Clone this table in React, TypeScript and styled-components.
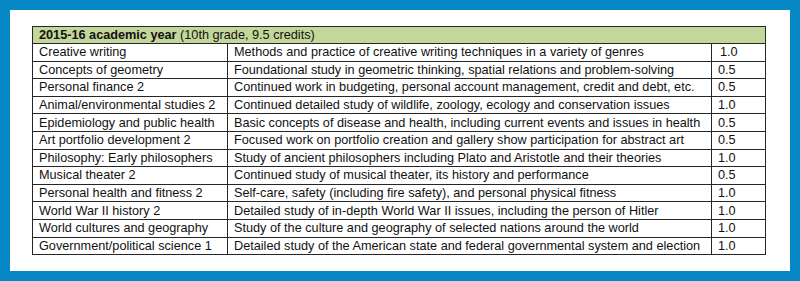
import React from 'react';
import styled, { createGlobalStyle } from 'styled-components';

const courses = [
  { name: 'Creative writing', about: 'Methods and practice of creative writing techniques in a variety of genres', credits: '1.0', nudge: true },
  { name: 'Concepts of geometry', about: 'Foundational study in geometric thinking, spatial relations and problem-solving', credits: '0.5' },
  { name: 'Personal finance 2', about: 'Continued work in budgeting, personal account management, credit and debt, etc.', credits: '0.5' },
  { name: 'Animal/environmental studies 2', about: 'Continued detailed study of wildlife, zoology, ecology and conservation issues', credits: '1.0' },
  { name: 'Epidemiology and public health', about: 'Basic concepts of disease and health, including current events and issues in health', credits: '0.5' },
  { name: 'Art portfolio development 2', about: 'Focused work on portfolio creation and gallery show participation for abstract art', credits: '0.5' },
  { name: 'Philosophy: Early philosophers', about: 'Study of ancient philosophers including Plato and Aristotle and their theories', credits: '1.0' },
  { name: 'Musical theater 2', about: 'Continued study of musical theater, its history and performance', credits: '0.5' },
  { name: 'Personal health and fitness 2', about: 'Self-care, safety (including fire safety), and personal physical fitness', credits: '1.0' },
  { name: 'World War II history 2', about: 'Detailed study of in-depth World War II issues, including the person of Hitler', credits: '1.0' },
  { name: 'World cultures and geography', about: 'Study of the culture and geography of selected nations around the world', credits: '1.0' },
  { name: 'Government/political science 1', about: 'Detailed study of the American state and federal governmental system and election', credits: '1.0' },
];

export default function App() {
  return (
    <>
      <GlobalStyle />
      <Panel>
        <Table>
          <colgroup>
            <Col $width={195} />
            <Col $width={484} />
            <Col $width={54} />
          </colgroup>
          <tbody>
            <HeaderRow>
              <td colSpan={3}>
                <b>2015-16 academic year</b> (10th grade, 9.5 credits)
              </td>
            </HeaderRow>
            {courses.map(course => (
              <Row key={course.name}>
                <td>{course.name}</td>
                <td>{course.about}</td>
                <Credit $nudge={course.nudge}>{course.credits}</Credit>
              </Row>
            ))}
          </tbody>
        </Table>
      </Panel>
    </>
  );
}

const GlobalStyle = createGlobalStyle`
  html, body {
    margin: 0;
    background: #0788c6;
  }
`;

const Panel = styled.div`
  margin: 10px;
  height: 261px;
  padding: 16px 0 0 22px;
  box-sizing: border-box;
  background: #fff;
`;

const Table = styled.table`
  width: 734px;
  table-layout: fixed;
  border-collapse: collapse;
  font-family: 'Liberation Sans', Arial, sans-serif;
  font-size: 12.7px;
  color: #111;

  td {
    border: 1px solid #262626;
    padding: 0 6px;
    white-space: nowrap;
    overflow: hidden;
    line-height: 16px;
  }
`;

const Col = styled.col<{ $width: number }>`
  width: ${p => p.$width}px;
`;

const HeaderRow = styled.tr`
  height: 17px;
  background: #c4d79b;

  b {
    font-weight: 700;
  }
`;

const Row = styled.tr`
  height: 17.6px;
`;

const Credit = styled.td<{ $nudge?: boolean }>`
  && {
    padding-left: ${p => (p.$nudge ? '8px' : '6px')};
  }
`;
